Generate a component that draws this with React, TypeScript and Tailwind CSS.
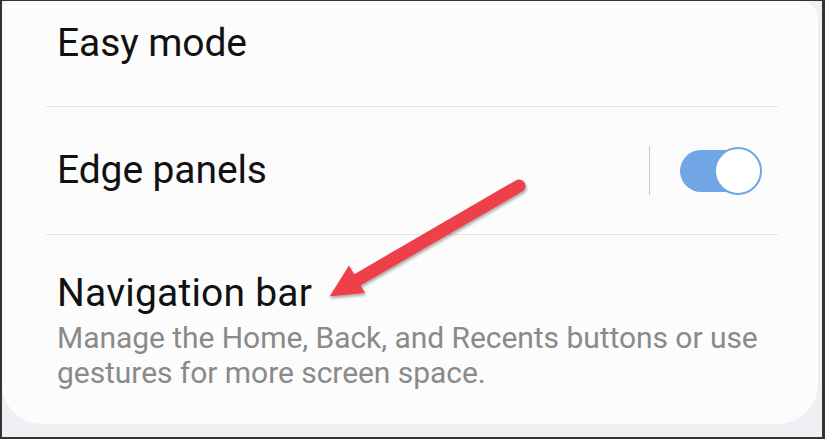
import React from "react";

export default function App() {
  return (
    <div
      className="w-[825px] h-[439px] flex flex-col border-t border-l-2 border-r-[3px] border-b-2 border-[#333333] bg-[#eef0f4] pr-[4px] pb-[13px]"
      style={{ fontFamily: "Roboto, 'Noto Sans', sans-serif" }}
    >
      <div className="relative flex-1 bg-[#fcfcfc] rounded-b-[40px] rounded-tl-[6px] rounded-tr-[18px]">
        <div className="ml-[44px] mr-[40px]">
          <div className="h-[106px] border-b border-[#e4e4e4] pl-[11px] pt-[20px]">
            <div className="text-[39px] leading-[45px] tracking-[-0.1px] text-[#111111]">Easy mode</div>
          </div>
          <div className="h-[128px] border-b border-[#e4e4e4] pl-[11px] pr-[16px] flex items-center">
            <div className="flex-1 text-[39px] leading-[45px] tracking-[-0.1px] text-[#111111]">Edge panels</div>
            <div className="w-px h-[49px] bg-[#c8c8c8] mr-[30px]" />
            <div className="relative w-[82px] h-[48px]">
              <div className="absolute left-0 top-[3px] w-[72px] h-[42px] rounded-full bg-[#70a6e6]" />
              <div className="absolute right-0 top-0 w-[48px] h-[48px] rounded-full bg-white border-2 border-[#70a6e6]" />
            </div>
          </div>
          <div className="pl-[11px] pt-[36px]">
            <div className="text-[39px] leading-[45px] tracking-[0.2px] text-[#111111]">Navigation bar</div>
            <div className="mt-[4px] text-[30px] leading-[35px] tracking-[-0.05px] text-[#8a8a8a] w-[740px]">
              Manage the Home, Back, and Recents buttons or use gestures for more screen space.
            </div>
          </div>
        </div>
      </div>
      <svg
        className="absolute left-0 top-0 pointer-events-none"
        width="825"
        height="439"
        viewBox="0 0 825 439"
      >
        <defs>
          <filter id="sh" x="-20%" y="-20%" width="140%" height="140%">
            <feDropShadow dx="1" dy="2" stdDeviation="1.5" floodColor="#000000" floodOpacity="0.35" />
          </filter>
        </defs>
        <g filter="url(#sh)">
          <line x1="519" y1="186" x2="352" y2="283" stroke="#ee4148" strokeWidth="13" strokeLinecap="round" />
          <polygon points="329.5,296.5 349,265.5 365,293" fill="#ee4148" />
        </g>
      </svg>
    </div>
  );
}
